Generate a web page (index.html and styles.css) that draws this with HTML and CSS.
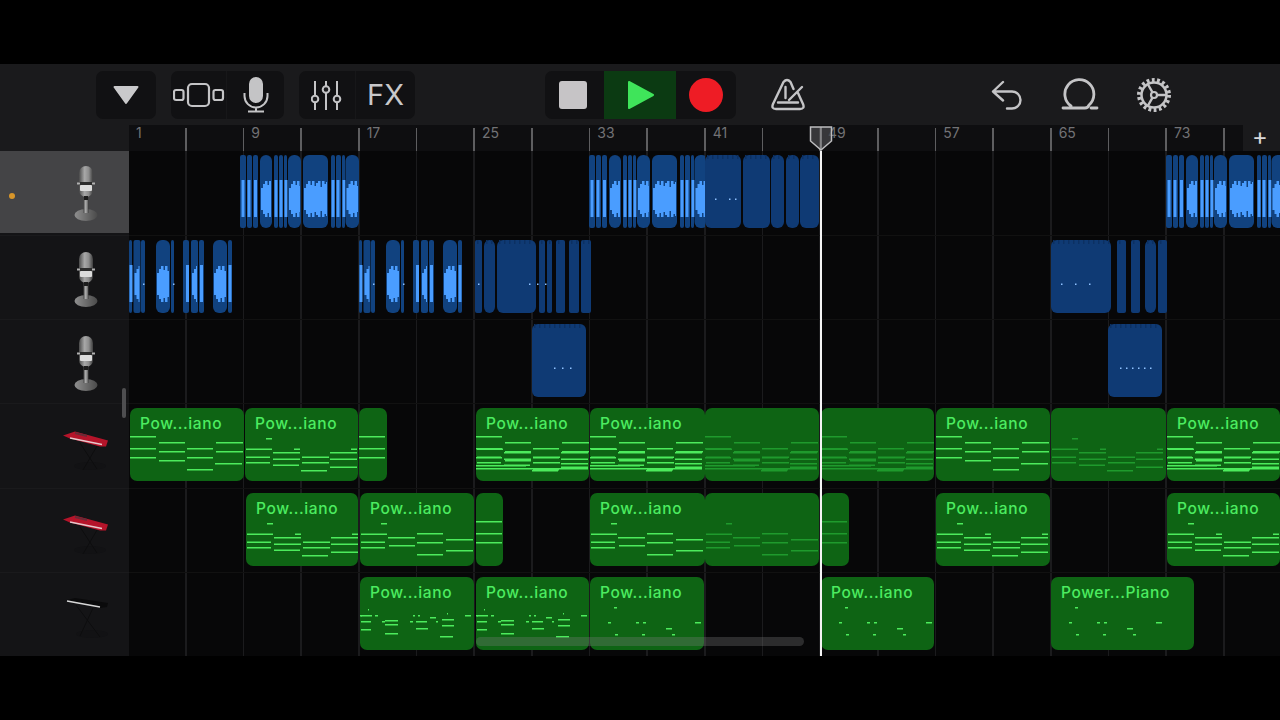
FILE: index.html
```html
<!DOCTYPE html>
<html lang="en">
<head>
    <meta charset="UTF-8">
    <title>Tracks</title>
    <link rel="stylesheet" href="styles.css">
</head>
<body>
    <div class="app">
        <!-- Toolbar -->
        <div class="toolbar">
            <div class="group first">
                <div class="tool wide"><svg width="28" height="20" viewBox="0 0 28 20"><path d="M2.500 2h23L14 18z" fill="#c9c9cb" stroke="#c9c9cb" stroke-width="2" stroke-linejoin="round"/></svg></div>
            </div>
            <div class="group">
                <div class="tool view"><svg width="52" height="26" viewBox="0 0 52 26" fill="none" stroke="#c4c4c6" stroke-width="2.200"><rect x="1" y="8" width="9.500" height="10" rx="2"/><rect x="15" y="2" width="21" height="22" rx="4"/><rect x="40.500" y="8" width="9.500" height="10" rx="2"/></svg></div>
                <div class="tool mic"><svg width="26" height="36" viewBox="0 0 26 36" fill="none" stroke="#c4c4c6" stroke-width="2"><rect x="7" y="1" width="12" height="24" rx="6" fill="#c4c4c6"/><path d="M1.500 16v3a11.500 11.500 0 0 0 23 0v-3M13 30.500v4M5 34.500h16"/></svg></div>
            </div>
            <div class="group">
                <div class="tool mixer"><svg width="32" height="30" viewBox="0 0 32 30" fill="#1a1a1c" stroke="#c4c4c6" stroke-width="2"><path d="M4 1v29M15 1v29M26 1v29"/><circle cx="4" cy="19" r="3.300"/><circle cx="15" cy="9.500" r="3.300"/><circle cx="26" cy="19" r="3.300"/></svg></div>
                <div class="tool fx">FX</div>
            </div>
            <div class="group transport">
                <div class="tool stop"><span class="stop-mark"></span></div>
                <div class="tool play"><svg class="play-mark" width="28" height="30" viewBox="0 0 28 30"><path d="M2 2l24 13L2 28z" fill="#3fe45a" stroke="#3fe45a" stroke-width="2" stroke-linejoin="round"/></svg></div>
                <div class="tool record"><span class="record-mark"></span></div>
            </div>
            <div class="icon metronome"><svg width="34" height="34" viewBox="0 0 34 34" fill="none" stroke="#c4c4c6" stroke-width="2.400" stroke-linejoin="round" stroke-linecap="round"><path d="M22.500 11L19.500 4Q16 0 12.500 4L2 26Q0 31 5 31H29Q34 31 32 26L27 15"/><path d="M7 24.500H27M14.500 9V20M18 22L31 9"/></svg></div>
            <div class="icon undo"><svg width="32" height="30" viewBox="0 0 32 30" fill="none" stroke="#c4c4c6" stroke-width="2.400" stroke-linecap="round" stroke-linejoin="round"><path d="M12 2L2 11.500l10 9M2 11.500h19a8.500 8.500 0 0 1 0 17h-5"/></svg></div>
            <div class="icon loop"><svg width="38" height="34" viewBox="0 0 38 34" fill="none" stroke="#c4c4c6" stroke-width="2.800" stroke-linecap="round"><path d="M10 28A14.500 14.500 0 1 1 28 27Q27 30 24 30H2"/><path d="M30 30h6"/></svg></div>
            <div class="icon gear"><svg width="36" height="36" viewBox="0 0 36 36" fill="none" stroke="#c4c4c6"><circle cx="18" cy="18" r="15" stroke-width="4" stroke-dasharray="2.800 2.436"/><circle cx="18" cy="18" r="12.500" stroke-width="2.500"/><circle cx="18" cy="18" r="3" stroke-width="2.200"/><path d="M21 18h9M16.500 15.400L12 7.500M16.500 20.600L12 28.500" stroke-width="2.400"/></svg></div>
        </div>

        <!-- Ruler -->
        <div class="ruler-row">
            <div class="corner"></div>
            <div id="ruler" class="ruler"></div>
            <div class="add-track">+</div>
        </div>

        <!-- Tracks -->
        <div class="main">
            <div id="headers" class="headers"><div class="scroll-v"></div></div>
            <div id="timeline" class="timeline">
                <div class="scroll-h"></div>
                <div class="playhead"><svg class="playhead-top" width="24" height="26" viewBox="0 0 24 26"><path d="M1.500 1h21v14L12 24 1.500 15z" fill="rgba(70,70,72,.75)" stroke="#bdbdbf" stroke-width="1.500"/><path d="M12 1v23" stroke="#bdbdbf"/></svg></div>
            </div>
        </div>
    </div>

    <svg width="0" height="0" class="defs">
        <defs>
            <linearGradient id="chrome" x1="0" x2="1" y1="0" y2="0">
                <stop offset="0" stop-color="#4a4a4a"/><stop offset=".4" stop-color="#a8a8a8"/><stop offset=".7" stop-color="#8c8c8c"/><stop offset="1" stop-color="#3e3e3e"/>
            </linearGradient>
            <linearGradient id="mic-base" x1="0" x2="1" y1="0" y2="0">
                <stop offset="0" stop-color="#8f8f8f"/><stop offset="1" stop-color="#4a4a4a"/>
            </linearGradient>
        </defs>
    </svg>

    <script src="script.js"></script>
</body>
</html>
```

FILE: styles.css
```css
body, html {
    margin: 0;
    padding: 0;
    height: 100%;
    background-color: #000;
    overflow: hidden;
    font-family: Inter, "Liberation Sans", sans-serif;
}
.app {
    display: flex;
    flex-direction: column;
    padding-top: 64px;
    height: 592px;
}
.defs {
    position: absolute;
}
.toolbar {
    display: flex;
    align-items: center;
    height: 61px;
    padding-left: 96px;
    background: #1a1a1c;
}
.group {
    display: flex;
    height: 48px;
    margin-left: 15px;
    border-radius: 7px;
    overflow: hidden;
    background: #111113;
}
.group.first {
    margin-left: 0;
}
.group.transport {
    margin-left: 130px;
}
.tool {
    display: flex;
    align-items: center;
    justify-content: center;
    height: 100%;
}
.tool + .tool {
    border-left: 1px solid #171719;
}
.wide { width: 60px; }
.view { width: 55px; }
.mic { width: 57px; }
.mixer { width: 56px; }
.fx {
    width: 59px;
    color: #c8c8ca;
    font-size: 29px;
    font-weight: 400;
}
.stop {
    width: 55px;
    padding-right: 4px;
}
.play {
    width: 72px;
    background: #0b3a12;
}
.play-mark {
    margin-left: 2px;
}
.tool + .play, .play + .tool {
    border-left: none;
}
.record { width: 60px; }
.stop-mark {
    width: 28px;
    height: 28px;
    border-radius: 3px;
    background: #c6c4c6;
}
.record-mark {
    width: 34px;
    height: 34px;
    border-radius: 50%;
    background: #ee1c25;
}
.icon {
    display: flex;
}
.metronome { margin-left: 35px; }
.undo { margin-left: 186px; }
.loop { margin-left: 38px; }
.gear { margin-left: 36.500px; }

.ruler-row {
    display: flex;
    height: 26px;
    background: #1a1a1c;
}
.corner {
    width: 129px;
}
.ruler {
    position: relative;
    width: 1114px;
    background: #0e0e10;
    background-image: repeating-linear-gradient(90deg, transparent 0, transparent 56.160px, #5e5e60 56.160px, #5e5e60 57.660px);
    background-size: 100% 23px;
    background-position: 0 3px;
    background-repeat: no-repeat;
}
.bar-label {
    position: absolute;
    top: 0;
    color: #727275;
    font-size: 14px;
    line-height: 16px;
}
.add-track {
    flex: 1;
    padding-right: 3px;
    color: #d8d8da;
    font-size: 24px;
    font-weight: 400;
    line-height: 24px;
    text-align: center;
}

.main {
    display: flex;
    height: 505px;
}
.headers {
    position: relative;
    display: grid;
    grid-template-rows: repeat(6, 1fr);
    width: 129px;
    background: #141416;
}
.header {
    display: flex;
    align-items: center;
    border-top: 1px solid #1a1a1c;
    box-sizing: border-box;
}
.header:first-child {
    border-top: none;
}
.header.selected {
    background: #444446;
    border-bottom: 2px solid #141416;
}
.mic-art {
    display: block;
    margin-left: 71px;
}
.keys-art {
    display: block;
    margin-left: 60px;
}
.dot {
    position: absolute;
    top: 42px;
    left: 9px;
    width: 6px;
    height: 6px;
    border-radius: 50%;
    background: #d8962a;
}
.scroll-v {
    position: absolute;
    top: 237px;
    right: 3px;
    width: 4px;
    height: 30px;
    border-radius: 2px;
    background: #4e4e50;
}
.timeline {
    position: relative;
    flex: 1;
    display: grid;
    grid-template-rows: repeat(6, 1fr);
    overflow: hidden;
    background: #070708;
    background-image: repeating-linear-gradient(90deg, transparent 0, transparent 56.160px, #1b1b1d 56.160px, #1b1b1d 57.660px);
}
.lane {
    position: relative;
    border-top: 1px solid #111;
    box-sizing: border-box;
}
.lane:first-of-type {
    border-top: none;
}
.region {
    position: absolute;
    top: 4px;
    height: 73px;
    overflow: hidden;
}
.region svg {
    position: absolute;
    top: 0;
    left: 0;
}
.midi {
    background: #0e6414;
    border-radius: 7px;
}
.midi-label {
    position: absolute;
    top: 7px;
    left: 10px;
    color: #4cec60;
    font-size: 15.500px;
    font-weight: 500;
    line-height: 18px;
    letter-spacing: .6px;
    white-space: nowrap;
}
.scroll-h {
    position: absolute;
    top: 486px;
    left: 347px;
    width: 328px;
    height: 9px;
    border-radius: 5px;
    background: rgba(125, 125, 125, .32);
    z-index: 2;
}
.playhead {
    position: absolute;
    top: 0;
    bottom: 0;
    left: 691px;
    width: 2px;
    background: #f4f4f4;
    z-index: 3;
}
.playhead-top {
    position: fixed;
    top: 126px;
    left: 808.500px;
}
```

FILE: script.js
```js
const ORIGIN = 129;
const BAR_WIDTH = 115.33 / 8;

// Ruler labels every 8 bars
const ruler = document.getElementById('ruler');
for (let bar = 1; bar < 80; bar += 8) {
    const label = document.createElement('span');
    label.className = 'bar-label';
    label.style.left = ((bar - 1) * BAR_WIDTH + 7) + 'px';
    label.textContent = bar;
    ruler.appendChild(label);
}

// Track header artwork
function micIcon() {
    return `<svg class="mic-art" width="30" height="58" viewBox="0 0 30 58">
        <ellipse cx="15" cy="52" rx="11.500" ry="6" fill="url(#mic-base)"/>
        <rect x="12.500" y="34" width="5" height="16" fill="url(#chrome)"/>
        <rect x="8" y="3" width="14" height="31" rx="7" fill="url(#chrome)"/>
        <rect x="8" y="19" width="14" height="3" fill="#2c2c2c"/>
        <rect x="9" y="22" width="12" height="6" rx="1" fill="#dcdcdc"/>
        <path d="M6 20.500h3M21 20.500h3" stroke="#b0b0b0" stroke-width="2"/>
        <rect x="13" y="33" width="4" height="4" fill="#1c1c1c"/>
    </svg>`;
}

function redKeys() {
    return `<svg class="keys-art" width="50" height="56" viewBox="0 0 50 56">
        <ellipse cx="30" cy="48" rx="16" ry="4" fill="#121214"/>
        <path d="M20 25L37 51M37 28L23 52" stroke="#0d0d0e" stroke-width="1"/>
        <path d="M3 17.500L15 13.500L48 22.500L46 28.500L40 28.500L10 20.500Z" fill="#b5142a"/>
        <path d="M15 15L27 18" stroke="#6a2a36" stroke-width="2"/>
        <path d="M10 20L42 26.500" stroke="#e6c8cc" stroke-width="1.300"/>
    </svg>`;
}

function blackKeys() {
    return `<svg class="keys-art" width="50" height="56" viewBox="0 0 50 56">
        <ellipse cx="32" cy="48" rx="16" ry="4" fill="#121214"/>
        <path d="M16 19L40 51M33 22L20 50" stroke="#0d0d0e" stroke-width="1"/>
        <path d="M7 14L15 12L48 17L47 21L40 22Z" fill="#0a0a0b"/>
        <path d="M7 15L40 21" stroke="#d8d8d8" stroke-width="1.300"/>
    </svg>`;
}

const headers = document.getElementById('headers');
const art = [micIcon(), micIcon(), micIcon(), redKeys(), redKeys(), blackKeys()];
art.forEach((svg, i) => {
    const header = document.createElement('div');
    header.className = 'header' + (i === 0 ? ' selected' : '');
    header.innerHTML = svg;
    headers.insertBefore(header, headers.lastElementChild);
});
const dot = document.createElement('div');
dot.className = 'dot';
headers.appendChild(dot);

// Audio regions: [start, end, kind], offsets from the clip's left edge
const VOCAL_A = [
    [0, 6, 'b', 1.500], [7, 12, 'b', 7.500], [13, 18, 'b', 14], [20, 32, 'w'], [34, 38, 'b', 34.500], [39, 43, 'b', 39.500], [44, 47, 'b', 44.500],
    [48, 61, 'w'], [63, 88, 'w'], [91, 95, 'b', 91.500], [96, 101, 'b', 96.500], [102, 105, 'b', 102.500], [105.500, 119, 'w']
];
const VOCAL_B = [
    [0, 3, 'b', 0.500], [4.500, 11.500, 'w'], [12, 16, 'd'], [27, 41, 'w'], [42, 45, 'd'], [54, 60, 'b', 57], [62, 69, 'w'], [70, 75, 'b', 71],
    [84, 98, 'w'], [99, 103, 'b', 99.500]
];
const QUIET_A = [[0, 36, 'q', [10, 24, 30]], [38, 65, 'q', [44, 59], 50], [66, 79, 'q', [73]], [81, 94, 'q', [86]], [95, 114, 'q', [], 107]];
const QUIET_B = [[0, 7, 'q', [3]], [9, 20, 'q', [14]], [22, 61, 'q', [32, 40, 48]], [64, 70, 'q', []], [72, 77, 'q', [], 74], [81, 90, 'q', [85]], [94, 104, 'q', [99]], [106, 116, 'q', [], 110]];
const QUIET_C = [[0, 60, 'q', [10, 24, 38]], [66, 75, 'q', [], 70], [80, 89, 'q', [85]], [94, 105, 'q', [], 99], [107, 116, 'q', [], 112]];
const QUIET_D = [[0, 54, 'q', [22, 30, 38]]];
const QUIET_E = [[0, 54, 'q', [12, 18, 24, 30, 36, 42]]];

const JAG = [22, 30, 36, 28, 36, 26, 32, 36, 24, 36, 30, 34, 26, 36];
const SEG = '#11427f';
const SEG_QUIET = '#0f3a74';
const WAVE = '#4a9dff';

function rect(x, y, w, h, fill, rx) {
    return `<rect x="${x}" y="${y}" width="${w}" height="${h}" fill="${fill}"${rx ? ` rx="${rx}"` : ''}/>`;
}

function segment(seg) {
    const [from, to, kind, extra, tall] = seg;
    const w = to - from;
    let out = rect(from, 0, w, 73, kind === 'q' ? SEG_QUIET : SEG, w > 10 ? 6 : 2);
    if (kind === 'b') out += rect(extra, 25, 3, 37, WAVE);
    if (kind === 'd') out += rect(from + 2, 43.500, 1.500, 1.500, '#8fc2ff');
    if (kind === 'w') {
        // solid body with a stepped outline
        for (let x = from + 1, i = 0; x < to - 1; x += 2, i++) {
            const h = JAG[i % JAG.length];
            out += rect(x, 44 - h / 2, Math.min(2.500, to - 1 - x), h, WAVE);
        }
    }
    if (kind === 'q') {
        for (let x = from + 2; x < to - 2; x += 5) out += rect(x, 0, 1.500, 4, '#0c3062');
        extra.forEach(d => { out += rect(from + d, 43.500, 1.500, 1.500, '#8fc2ff'); });
        if (tall) out += rect(from + tall, 34, 2, 18, '#5ea8f5');
    }
    return out;
}

function addRegion(lane, el, x, width) {
    el.style.left = (x - ORIGIN) + 'px';
    el.style.width = width + 'px';
    lanes[lane].appendChild(el);
}

function audio(lane, x, width, pattern) {
    const el = document.createElement('div');
    el.className = 'region';
    el.innerHTML = `<svg width="${width}" height="73">${pattern.map(segment).join('')}</svg>`;
    addRegion(lane, el, x, width);
}

// MIDI note patterns: [x, y, width]
const RIFF_A = [[0, 28, 26], [0, 40, 26], [0, 49, 26], [29, 34, 26], [29, 43, 26], [29, 52, 26], [57, 40, 26], [57, 49, 26], [57, 61, 26], [86, 34, 27], [86, 43, 27], [85, 55, 27]];
const RIFF_B = [[21, 30, 6], [1, 40.500, 26], [1, 48.500, 24], [1, 54, 24], [28, 44, 27], [28, 50.500, 27], [28, 56.500, 26], [49, 40.500, 6], [57, 48.500, 27], [57, 54, 27], [56, 62, 26], [85, 44, 27], [85, 50.500, 27], [85, 58.500, 27], [106, 40.500, 6]];
const RIFF_DENSE = RIFF_A.concat(RIFF_B.filter(n => n[2] > 6), [[0, 60, 112], [0, 57, 50]]);
const RIFF_FILL = RIFF_B.slice(0, 5).concat(RIFF_A.slice(5, 9)).concat([[86, 57, 27], [86, 46, 27]]);
const RIFF_SPLIT = [[8, 32, 1], [-1, 38, 3], [1, 38, 11], [1, 44, 10], [1, 52, 10], [15, 38, 3], [25, 43, 13], [25, 47, 13], [25, 56, 13], [22, 44, 3], [53, 38, 2], [58, 38, 2], [50, 44, 3], [56, 44, 11], [56, 51, 12], [87, 36, 1], [70, 40, 6], [76, 44, 2], [82, 42, 12], [82, 48, 12], [80, 59, 13], [105, 38, 6]];
const RIFF_SPARSE = [[24, 30, 3], [18, 45, 3], [46, 45, 3], [53, 45, 3], [76, 51, 6], [25, 57, 3], [52, 57, 3], [82, 57, 3], [105, 45, 6]];

function midi(lane, x, width, name, notes, dim) {
    const el = document.createElement('div');
    el.className = 'region midi';
    const color = dim ? '#1f9a2d' : '#4ceb5c';
    const bars = notes.map(n => rect(n[0], n[1], n[2], 1.500, color)).join('');
    el.innerHTML = `<svg width="${width}" height="73">${bars}</svg>` + (name ? `<span class="midi-label">${name}</span>` : '');
    addRegion(lane, el, x, width);
}

// Lanes
const timeline = document.getElementById('timeline');
const lanes = [];
for (let i = 0; i < 6; i++) {
    const lane = document.createElement('div');
    lane.className = 'lane';
    timeline.insertBefore(lane, timeline.children[i]);
    lanes.push(lane);
}

audio(0, 240, 119, VOCAL_A);
audio(0, 589, 116, VOCAL_A);
audio(0, 705, 114, QUIET_A);
audio(0, 1166, 114, VOCAL_A);
audio(1, 129, 104, VOCAL_B);
audio(1, 359, 104, VOCAL_B);
audio(1, 475, 116, QUIET_B);
audio(1, 1051, 116, QUIET_C);
audio(2, 532, 54, QUIET_D);
audio(2, 1108, 54, QUIET_E);

const NAME = 'Pow...iano';
midi(3, 130, 114, NAME, RIFF_A);
midi(3, 245, 113, NAME, RIFF_B);
midi(3, 359, 28, '', RIFF_A);
midi(3, 476, 113, NAME, RIFF_DENSE);
midi(3, 590, 115, NAME, RIFF_DENSE);
midi(3, 705, 114, '', RIFF_DENSE, true);
midi(3, 821, 113, '', RIFF_DENSE, true);
midi(3, 936, 114, NAME, RIFF_A);
midi(3, 1051, 115, '', RIFF_B, true);
midi(3, 1167, 113, NAME, RIFF_DENSE);

midi(4, 246, 112, NAME, RIFF_B);
midi(4, 360, 114, NAME, RIFF_FILL);
midi(4, 476, 27, '', RIFF_A);
midi(4, 590, 115, NAME, RIFF_FILL);
midi(4, 705, 114, '', RIFF_FILL, true);
midi(4, 821, 28, '', RIFF_A, true);
midi(4, 936, 114, NAME, RIFF_B);
midi(4, 1167, 113, NAME, RIFF_B);

midi(5, 360, 114, NAME, RIFF_SPLIT);
midi(5, 476, 113, NAME, RIFF_SPLIT);
midi(5, 590, 114, NAME, RIFF_SPARSE);
midi(5, 821, 113, NAME, RIFF_SPARSE);
midi(5, 1051, 143, 'Power...Piano', RIFF_SPARSE);
```
